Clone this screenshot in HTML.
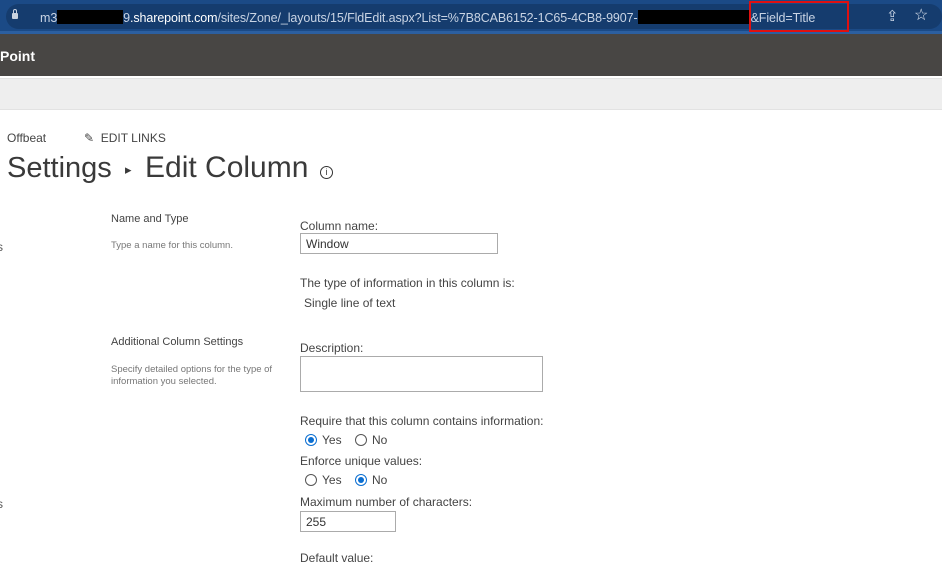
<!DOCTYPE html>
<html><head><style>
*{margin:0;padding:0;box-sizing:border-box}
body{width:942px;height:568px;overflow:hidden;background:#fff;font-family:"Liberation Sans",sans-serif;color:#333;position:relative}
.a{position:absolute;white-space:nowrap}
.s{font-size:12px;color:#444}
.sm{font-size:9.5px;color:#777}
.in{position:absolute;border:1px solid #ababab;background:#fff;font-size:12px;padding:3px 5px;color:#333}
.r{position:absolute;width:12px;height:12px;border:1px solid #555;border-radius:50%}
.r.on{border-color:#0a6ed1}
.r.on:after{content:"";position:absolute;left:2px;top:2px;width:6px;height:6px;border-radius:50%;background:#0a6ed1}
</style></head><body>
<div class="a" style="left:0;top:0;width:942px;height:33px;background:#1b4a86"></div>
<div class="a" style="left:6px;top:4px;width:936px;height:25px;border-radius:13px;background:#153c6e"></div>
<div class="a" style="left:0;top:31px;width:942px;height:3px;background:#2c5fa0"></div>
<div class="a" style="left:12px;top:13px;width:6px;height:6px;background:#c8d2e0;border-radius:1px"></div>
<div class="a" style="left:13px;top:9px;width:4px;height:5px;border:1.2px solid #c8d2e0;border-bottom:none;border-radius:2px 2px 0 0"></div>
<div class="a" style="left:40px;top:10px;font-size:12.5px;letter-spacing:-0.1px;color:#c9d4e4">m3<span style="display:inline-block;width:66px;height:14px;background:#000;vertical-align:-2px"></span>9<span style="color:#fff">.sharepoint.com</span>/sites/Zone/_layouts/15/FldEdit.aspx?List=%7B8CAB6152-1C65-4CB8-9907-<span style="display:inline-block;width:113px;height:14px;background:#000;vertical-align:-2px"></span>&amp;Field=Title</div>
<div class="a" style="left:749px;top:1px;width:100px;height:31px;border:2px solid #e01010"></div>
<div class="a" style="left:886px;top:7px;font-size:15px;color:#c9d4e4">⇪</div>
<div class="a" style="left:914px;top:5px;font-size:16px;color:#dfe6f0">☆</div>
<div class="a" style="left:0;top:34px;width:942px;height:42px;background:#484644"></div>
<div class="a" style="left:0;top:48px;font-size:14px;font-weight:bold;color:#fff">Point</div>
<div class="a" style="left:0;top:78px;width:942px;height:32px;background:#eeeeee;border-top:1px solid #e2e2e2;border-bottom:1px solid #e2e2e2"></div>
<div class="a" style="left:7px;top:131px;font-size:12px;color:#444">Offbeat</div>
<div class="a" style="left:84px;top:131px;font-size:12px;color:#444">✎&nbsp;&nbsp;EDIT LINKS</div>
<div class="a" style="left:7px;top:152px;font-size:29px;color:#3a3a3a">Settings</div>
<div class="a" style="left:125px;top:162px;font-size:13px;color:#3a3a3a">▸</div>
<div class="a" style="left:145px;top:151px;font-size:30px;color:#3a3a3a">Edit Column</div>
<div class="a" style="left:320px;top:166px;width:13px;height:13px;border:1.5px solid #333;border-radius:50%;text-align:center;line-height:10px;font-size:9px;color:#333">i</div>
<div class="a" style="left:-3px;top:240px;font-size:12px;color:#555">s</div>
<div class="a" style="left:-3px;top:497px;font-size:12px;color:#555">s</div>
<div class="a s" style="left:111px;top:213px;font-size:11px">Name and Type</div>
<div class="a sm" style="left:111px;top:240px">Type a name for this column.</div>
<div class="a s" style="left:111px;top:336px;font-size:11px">Additional Column Settings</div>
<div class="a sm" style="left:111px;top:364px;line-height:12px">Specify detailed options for the type of<br>information you selected.</div>
<div class="a s" style="left:300px;top:219px">Column name:</div>
<div class="in" style="left:300px;top:233px;width:198px;height:21px">Window</div>
<div class="a s" style="left:300px;top:276px">The type of information in this column is:</div>
<div class="a s" style="left:304px;top:296px">Single line of text</div>
<div class="a s" style="left:300px;top:341px">Description:</div>
<div class="in" style="left:300px;top:356px;width:243px;height:36px"></div>
<div class="a s" style="left:300px;top:414px">Require that this column contains information:</div>
<div class="r on" style="left:305px;top:434px"></div><div class="a s" style="left:322px;top:433px">Yes</div>
<div class="r" style="left:355px;top:434px"></div><div class="a s" style="left:372px;top:433px">No</div>
<div class="a s" style="left:300px;top:454px">Enforce unique values:</div>
<div class="r" style="left:305px;top:474px"></div><div class="a s" style="left:322px;top:473px">Yes</div>
<div class="r on" style="left:355px;top:474px"></div><div class="a s" style="left:372px;top:473px">No</div>
<div class="a s" style="left:300px;top:495px">Maximum number of characters:</div>
<div class="in" style="left:300px;top:511px;width:96px;height:21px">255</div>
<div class="a s" style="left:300px;top:551px">Default value:</div>
</body></html>
